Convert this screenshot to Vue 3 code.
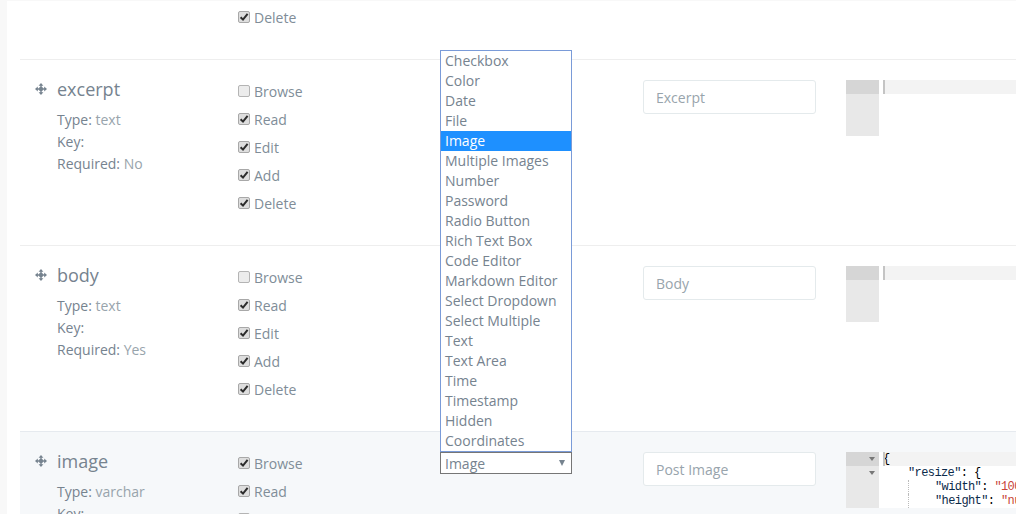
<script setup>
const options = ['Checkbox','Color','Date','File','Image','Multiple Images','Number','Password','Radio Button','Rich Text Box','Code Editor','Markdown Editor','Select Dropdown','Select Multiple','Text','Text Area','Time','Timestamp','Hidden','Coordinates']
const rows = [
  { name: 'excerpt', type: 'text', required: 'No', label: 'Excerpt', perms: [['Browse', false],['Read', true],['Edit', true],['Add', true],['Delete', true]] },
  { name: 'body', type: 'text', required: 'Yes', label: 'Body', perms: [['Browse', false],['Read', true],['Edit', true],['Add', true],['Delete', true]] },
  { name: 'image', type: 'varchar', required: 'No', label: 'Post Image', active: true, json: true, perms: [['Browse', true],['Read', true],['Edit', false],['Add', true],['Delete', true]] }
]
</script>

<template>
  <div class="panel">
    <div class="row first">
      <div></div>
      <div class="perms">
        <label class="perm"><span class="box on"><svg viewBox="0 0 12 12"><path d="M2.6 6.2 5 8.6 9.6 2.9" /></svg></span><span class="ptext">Delete</span></label>
      </div>
    </div>
    <div v-for="row in rows" :key="row.name" class="row" :class="{ active: row.active }">
      <div class="field">
        <svg class="move" viewBox="0 0 12 12">
          <path d="M6 0 8.4 2.8H6.7V4.2H5.3V2.8H3.6Z" />
          <path d="M6 12 8.4 9.2H6.7V7.8H5.3V9.2H3.6Z" />
          <path d="M0 6 2.8 3.6V5.3H4.2V6.7H2.8V8.4Z" />
          <path d="M12 6 9.2 3.6V5.3H7.8V6.7H9.2V8.4Z" />
          <circle cx="6" cy="6" r="2.2" />
        </svg>
        <div>
          <div class="name">{{ row.name }}</div>
          <div class="meta"><b>Type:</b> {{ row.type }}</div>
          <div class="meta"><b>Key:</b></div>
          <div class="meta"><b>Required:</b> {{ row.required }}</div>
        </div>
      </div>
      <div class="perms">
        <label v-for="p in row.perms" :key="p[0]" class="perm">
          <span class="box" :class="{ on: p[1] }"><svg v-if="p[1]" viewBox="0 0 12 12"><path d="M2.6 6.2 5 8.6 9.6 2.9" /></svg></span><span class="ptext">{{ p[0] }}</span>
        </label>
      </div>
      <div class="select-cell">
        <div v-if="row.active" class="select">
          <span>Image</span><i class="arrow"></i>
          <ul class="list">
            <li v-for="o in options" :key="o" :class="{ sel: o === 'Image' }">{{ o }}</li>
          </ul>
        </div>
      </div>
      <div><div class="input">{{ row.label }}</div></div>
      <div class="editor">
        <div class="gutter">
          <div class="g-line cur"><i v-if="row.json" class="fold"></i></div>
          <div class="g-line"><i v-if="row.json" class="fold"></i></div>
        </div>
        <div class="code">
          <div class="line cur"><span class="caret"></span><span v-if="row.json">{</span></div>
          <template v-if="row.json">
            <div class="line in1"><span class="k">"resize"</span>: {</div>
            <div class="line in2"><span class="guide"></span><span class="k">"width"</span>: <span class="s">"1000"</span>,</div>
            <div class="line in2"><span class="guide"></span><span class="k">"height"</span>: <span class="s">"null"</span>,</div>
            <div class="line in1">}</div>
          </template>
        </div>
      </div>
    </div>
  </div>
</template>

<style scoped>
.panel {
  margin: 1px 0 0 7px;
  background: #fff;
  font-family: "Open Sans", sans-serif;
  font-size: 14px;
  color: #76838f;
  height: 513px;
  overflow: hidden;
}
.row {
  margin-left: 13px;
  display: grid;
  grid-template-columns: 218px 202px 203px 203px 1fr;
  padding: 20px 0 31px;
  border-top: 1px solid #eeeeee;
}
.row.first {
  border-top: 0;
  padding-top: 5px;
}
.row.active {
  background: #f6f8fa;
  border-top-color: #e6eaef;
}
.field {
  display: flex;
  gap: 10px;
  padding-left: 15px;
}
.move {
  width: 12px;
  height: 12px;
  margin-top: 3px;
  flex: none;
  fill: #76838f;
}
.name {
  font-size: 18px;
  line-height: 18px;
  margin-bottom: 11px;
}
.meta {
  line-height: 22px;
  color: #98a4ac;
}
.meta b {
  font-weight: 400;
  color: #76838f;
}
.perms {
  display: flex;
  flex-direction: column;
  gap: 6px;
}
.perm {
  display: flex;
  align-items: center;
  gap: 4px;
  height: 22px;
}
.ptext {
  line-height: 22px;
  position: relative;
  top: 1px;
  color: #808d98;
}
.box {
  width: 12px;
  height: 12px;
  box-sizing: border-box;
  border: 1px solid #b4b4b4;
  border-radius: 2px;
  background: #ececec;
  display: block;
}
.box.on {
  background: #dedede;
  border-color: #a8a8a8;
}
.box svg {
  display: block;
  width: 12px;
  height: 12px;
  margin: -1px;
  fill: none;
  stroke: #2c2c2c;
  stroke-width: 2;
}
.select {
  position: relative;
  width: 132px;
  height: 22px;
  box-sizing: border-box;
  border: 1px solid #767676;
  background: #fff;
  padding-left: 4px;
  line-height: 21px;
}
.arrow {
  position: absolute;
  right: 6px;
  top: 7px;
  border-left: 3px solid transparent;
  border-right: 3px solid transparent;
  border-top: 6px solid #76838f;
}
.list {
  position: absolute;
  left: -1px;
  bottom: 21px;
  width: 132px;
  box-sizing: border-box;
  margin: 0;
  padding: 0;
  list-style: none;
  background: #fff;
  border: 1px solid #7a9bd8;
  z-index: 5;
}
.list li {
  height: 20px;
  line-height: 20px;
  padding-left: 4px;
}
.list li.sel {
  background: #1e90ff;
  color: #fff;
}
.input {
  width: 173px;
  height: 34px;
  box-sizing: border-box;
  border: 1px solid #e4eaec;
  border-radius: 3px;
  background: #fff;
  padding-left: 12px;
  line-height: 34px;
  color: #98a4ac;
}
.editor {
  display: flex;
  height: 56px;
  background: #fff;
  font-family: "Liberation Mono", monospace;
  font-size: 12px;
  letter-spacing: -0.6px;
  color: #000;
  line-height: 14px;
}
.gutter {
  width: 33px;
  background: #e8e8e8;
  flex: none;
  height: 56px;
}
.g-line {
  height: 14px;
  position: relative;
}
.g-line.cur {
  background: #d6d6d6;
}
.fold {
  position: absolute;
  right: 4px;
  top: 5px;
  border-left: 3px solid transparent;
  border-right: 3px solid transparent;
  border-top: 4px solid #777;
}
.code {
  flex: 1;
  min-width: 0;
  overflow: hidden;
  white-space: pre;
}
.line {
  height: 14px;
  padding-left: 4px;
  position: relative;
}
.line.cur {
  background: linear-gradient(90deg, #fff 6px, #f3f3f3 6px);
}
.caret {
  position: absolute;
  left: 4px;
  top: 0;
  width: 2px;
  height: 14px;
  background: #c4c4c4;
}
.line.in1 { padding-left: 29px; }
.line.in2 { padding-left: 56px; }
.guide {
  position: absolute;
  left: 29px;
  top: 0;
  height: 14px;
  border-left: 1px dotted #bbb;
}
.k { color: #0b2a4a; }
.s { color: #c7443a; }
</style>

<style>
html, body {
  margin: 0;
  background: #f8f8f8;
  overflow: hidden;
}
</style>
